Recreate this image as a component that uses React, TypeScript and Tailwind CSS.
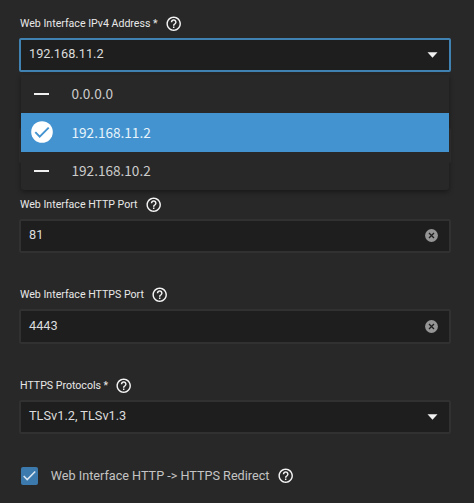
import { useState, type ReactNode } from "react";
import { MdHelpOutline } from "react-icons/md";

const addresses = ["0.0.0.0", "192.168.11.2", "192.168.10.2"];

const Label = ({ children }: { children: ReactNode }) => (
    <div className="flex h-7 items-center gap-[8px] pl-[1px] text-[10.6px] leading-none text-[#e8e8e8]">
        <span className="pt-[1.5px] whitespace-nowrap">{children}</span>
        <MdHelpOutline className="-ml-[1px] size-[17.4px] shrink-0 text-[#f4f4f4]" />
    </div>
);

const Caret = () => (
    <svg viewBox="0 0 10 6" className="mr-[11px] h-[6px] w-[11px] shrink-0" fill="#f0f0f0">
        <path d="M0 .3h10L5 5.7z" />
    </svg>
);

const Clear = () => (
    <svg viewBox="0 0 13 13" className="mr-[10.5px] size-[13px] shrink-0">
        <circle cx="6.5" cy="6.5" r="6.4" fill="#959595" />
        <path d="M4 4l5 5M9 4L4 9" stroke="#1e1e1e" strokeWidth="1.3" />
    </svg>
);

const Box = ({ children, focused }: { children?: ReactNode; focused?: boolean }) => (
    <div
        className={`flex h-[34.5px] items-center justify-between rounded-[2px] border-2 bg-[#1e1e1e] pl-[8px] text-[12.75px] text-[#dcdcdc] [&>span]:pb-[1.5px] ${
            focused ? "border-[#4083b3]" : "border-[#313131]"
        }`}
    >
        {children}
    </div>
);

export default function App() {
    const [selected, setSelected] = useState("192.168.11.2");
    const [redirect, setRedirect] = useState(true);

    return (
        <main className="h-[503px] w-[474px] overflow-hidden bg-[#282828] pt-[9.5px] pr-[23.5px] pl-[19px] font-['Roboto',sans-serif]">
            <div className="relative mb-7">
                <Label>Web Interface IPv4 Address *</Label>
                <Box focused>
                    <span>{selected}</span>
                    <Caret />
                </Box>
                <ul className="absolute top-[65.5px] right-[2px] left-[1.5px] z-10 rounded-b-[3px] bg-[#282828] shadow-[0_2px_5px_rgba(0,0,0,0.4)]">
                    {addresses.map((address) => (
                        <li
                            key={address}
                            onClick={() => setSelected(address)}
                            className={`flex h-[38.3px] cursor-pointer items-center text-[13.6px] font-['Noto_Sans_CJK_SC',sans-serif] ${
                                address === selected ? "bg-[#4293d0] text-[#e8f3fb]" : "text-[#cccccc]"
                            }`}
                        >
                            <span className="flex w-[42px] shrink-0 justify-center">
                                {address === selected ? (
                                    <svg viewBox="0 0 22 22" className="size-[22px]">
                                        <circle cx="11" cy="11" r="10.8" fill="#fff" />
                                        <path d="M4.3 11.2l4.4 4.4 9-9" fill="none" stroke="#4293d0" strokeWidth="1.9" />
                                    </svg>
                                ) : (
                                    <span className="h-[2px] w-[15px] bg-[#f0f0f0]" />
                                )}
                            </span>
                            <span className="ml-[9px] leading-none">{address}</span>
                        </li>
                    ))}
                </ul>
            </div>

            {/* covered by the open address menu */}
            <div className="mb-7 pt-7">
                <Box />
            </div>

            <div className="mb-7">
                <Label>Web Interface HTTP Port</Label>
                <Box>
                    <span>81</span>
                    <Clear />
                </Box>
            </div>

            <div className="mb-7">
                <Label>Web Interface HTTPS Port</Label>
                <Box>
                    <span>4443</span>
                    <Clear />
                </Box>
            </div>

            <div>
                <Label>HTTPS Protocols *</Label>
                <Box>
                    <span>TLSv1.2, TLSv1.3</span>
                    <Caret />
                </Box>
            </div>

            <div className="mt-[32px] flex h-[20px] items-center pl-[2px]">
                <button
                    onClick={() => setRedirect(!redirect)}
                    className="flex size-[17.3px] items-center justify-center rounded-[2px] bg-[#3c7aae]"
                >
                    {redirect && (
                        <svg viewBox="0 0 17 17" className="size-[17px]" fill="none" stroke="#d9e6f1" strokeWidth="1.6">
                            <path d="M2.7 9l3.5 3.5 8-8" />
                        </svg>
                    )}
                </button>
                <span className="ml-[12.5px] text-[12.65px] text-[#c4c4c4]">Web Interface HTTP -&gt; HTTPS Redirect</span>
                <MdHelpOutline className="ml-[8px] size-[17.4px] text-[#f4f4f4]" />
            </div>
        </main>
    );
}
